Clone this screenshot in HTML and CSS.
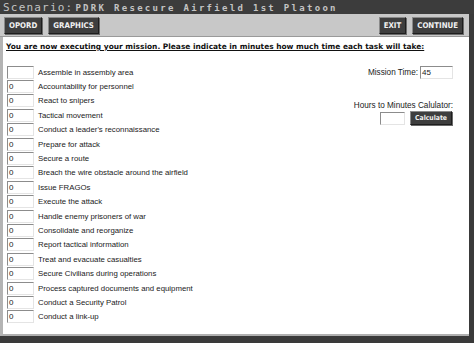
FILE: index.html
```html
<!DOCTYPE html>
<html>
<head>
<meta charset="utf-8">
<link rel="stylesheet" href="styles.css">
</head>
<body>
<div class="app">
  <div class="titlebar">
    <span class="scn">Scenario:</span><span class="name">PDRK Resecure Airfield 1st Platoon</span>
  </div>
  <div class="toolbar">
    <div class="group">
      <button class="btn">OPORD</button>
      <button class="btn">GRAPHICS</button>
    </div>
    <div class="group">
      <button class="btn">EXIT</button>
      <button class="btn">CONTINUE</button>
    </div>
  </div>
  <div class="main">
    <div class="panel">
      <p class="heading">You are now executing your mission. Please indicate in minutes how much time each task will take:</p>
      <div class="body">
        <ul class="tasks">
          <li><span class="box"></span><span>Assemble in assembly area</span></li>
          <li><span class="box">0</span><span>Accountability for personnel</span></li>
          <li><span class="box">0</span><span>React to snipers</span></li>
          <li><span class="box">0</span><span>Tactical movement</span></li>
          <li><span class="box">0</span><span>Conduct a leader's reconnaissance</span></li>
          <li><span class="box">0</span><span>Prepare for attack</span></li>
          <li><span class="box">0</span><span>Secure a route</span></li>
          <li><span class="box">0</span><span>Breach the wire obstacle around the airfield</span></li>
          <li><span class="box">0</span><span>Issue FRAGOs</span></li>
          <li><span class="box">0</span><span>Execute the attack</span></li>
          <li><span class="box">0</span><span>Handle enemy prisoners of war</span></li>
          <li><span class="box">0</span><span>Consolidate and reorganize</span></li>
          <li><span class="box">0</span><span>Report tactical information</span></li>
          <li><span class="box">0</span><span>Treat and evacuate casualties</span></li>
          <li><span class="box">0</span><span>Secure Civilians during operations</span></li>
          <li><span class="box">0</span><span>Process captured documents and equipment</span></li>
          <li><span class="box">0</span><span>Conduct a Security Patrol</span></li>
          <li><span class="box">0</span><span>Conduct a link-up</span></li>
        </ul>
        <div class="side">
          <div class="mission"><span>Mission Time:</span><span class="box wide">45</span></div>
          <div class="calc">
            <div class="calc-label">Hours to Minutes Calulator:</div>
            <div class="calc-row"><span class="box small"></span><button class="btn calc-btn">Calculate</button></div>
          </div>
        </div>
      </div>
    </div>
    <div class="edge"></div>
  </div>
  <div class="footer"></div>
</div>
</body>
</html>
```
FILE: styles.css
```css
html, body {
  margin: 0;
  padding: 0;
  background: #3a3a3a;
}
.app {
  width: 474px;
  height: 343px;
  display: flex;
  flex-direction: column;
  background: #3a3a3a;
  overflow: hidden;
}
.titlebar {
  height: 14px;
  background: #3c3c3c;
  color: #c4c4c4;
  display: flex;
  align-items: center;
  padding-left: 3px;
  white-space: nowrap;
}
.scn {
  font-family: "DejaVu Sans Mono", monospace;
  font-size: 11px;
  letter-spacing: 1.2px;
}
.name {
  font-family: "DejaVu Sans Mono", monospace;
  font-weight: bold;
  font-size: 9px;
  letter-spacing: 2.3px;
  margin-left: 2px;
  padding-top: 1px;
}
.toolbar {
  height: 22px;
  background: #c8c8c8;
  margin-right: 5px;
  border-bottom: 1px solid #9a9a9a;
  display: flex;
  justify-content: space-between;
  align-items: center;
  padding: 0 6px 0 4px;
}
.group {
  display: flex;
  gap: 6px;
}
.btn {
  font-family: "DejaVu Sans Condensed", "DejaVu Sans", sans-serif;
  font-weight: bold;
  font-size: 7.8px;
  color: #f2f2f2;
  background: #3e3e3e;
  border: 1px solid;
  border-color: #8a8a8a #1e1e1e #1e1e1e #8a8a8a;
  box-shadow: 1px 1px 0 #6a6a6a;
  padding: 0 4px;
  height: 17px;
  margin: 0;
}
.main {
  flex: 1;
  display: flex;
  min-height: 0;
}
.panel {
  flex: 1;
  background: #ffffff;
  border-left: 3px solid #b4b4b4;
  border-bottom: 2px solid #b0b0b0;
  padding: 5px 0 0 3px;
  font-family: "Liberation Sans", Arial, sans-serif;
  color: #1a1a1a;
}
.edge {
  width: 5px;
  background: #3a3a3a;
}
.heading {
  margin: 0;
  font-family: "DejaVu Sans", sans-serif;
  font-weight: bold;
  font-size: 7.45px;
  line-height: 10px;
  text-decoration: underline;
  color: #111;
}
.body {
  display: flex;
  justify-content: space-between;
  margin-top: 13px;
}
.tasks {
  list-style: none;
  margin: 0;
  padding: 0 0 0 1px;
  display: flex;
  flex-direction: column;
}
.tasks li {
  height: 14.4px;
  display: flex;
  align-items: center;
  gap: 4px;
  font-size: 7.8px;
}
.box {
  box-sizing: border-box;
  width: 27px;
  height: 13px;
  border: 1px solid;
  border-color: #8c8c8c #e4e4e4 #e4e4e4 #8c8c8c;
  background: #fff;
  font-family: "Liberation Sans", Arial, sans-serif;
  font-size: 8px;
  line-height: 11px;
  padding-left: 1px;
  display: inline-block;
}
.side {
  display: flex;
  flex-direction: column;
  align-items: flex-end;
  padding-right: 16px;
  font-size: 8.2px;
}
.mission {
  display: flex;
  align-items: center;
  gap: 2px;
  height: 13px;
  margin-top: 1px;
}
.box.wide {
  width: 33px;
}
.calc {
  margin-top: 22px;
  display: flex;
  flex-direction: column;
  align-items: flex-end;
}
.calc-row {
  display: flex;
  align-items: center;
  gap: 5px;
  margin-top: 1px;
  margin-right: 1px;
}
.box.small {
  width: 25px;
}
.calc-btn {
  height: 14px;
  font-size: 6.8px;
  padding: 0 4px;
}
.footer {
  height: 7px;
  background: #3a3a3a;
}
```
